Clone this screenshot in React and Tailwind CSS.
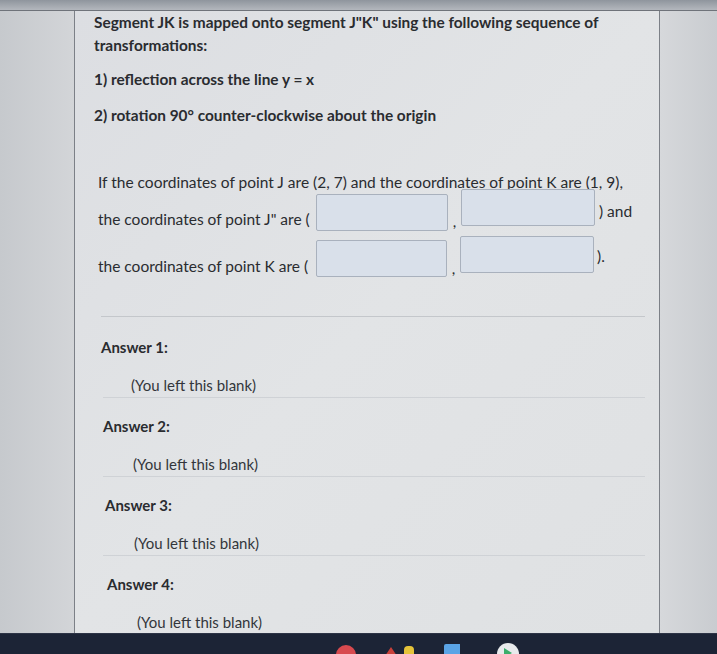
export default function App() {
  const answers = [
    { label: 'Answer 1:', pl: 'pl-[26px]', bl: 'pl-[56px]' },
    { label: 'Answer 2:', pl: 'pl-[28px]', bl: 'pl-[58px]' },
    { label: 'Answer 3:', pl: 'pl-[30px]', bl: 'pl-[59px]' },
    { label: 'Answer 4:', pl: 'pl-[32px]', bl: 'pl-[62px]' },
  ];

  return (
    <div
      className="w-[717px] h-[654px] overflow-hidden flex flex-col bg-[#cfd2d5] text-[#2a2c30]"
      style={{ fontFamily: 'Lato, "Open Sans", sans-serif' }}
    >
      <div className="h-[11px] bg-gradient-to-b from-[#8f959d] to-[#b3b7bd] border-b border-[#6f737a]" />

      <div className="flex-1 flex min-h-0">
        <div className="w-[74px] bg-gradient-to-r from-[#c6c9cd] to-[#d3d5d8]" />

        <div className="w-[586px] bg-gradient-to-br from-[#dcdee2] via-[#e2e4e6] to-[#dfe1e3] border-l border-r border-[#7c8087] flex flex-col">
          <div className="pl-[19px] text-[15.4px] font-bold leading-[23px]">
            <p>Segment JK is mapped onto segment J"K" using the following sequence of</p>
            <p>transformations:</p>
            <p className="mt-[11px]">1) reflection across the line y = x</p>
            <p className="mt-[13px]">2) rotation 90° counter-clockwise about the origin</p>
          </div>

          <div className="pl-[23px] pr-[20px] mt-[43px] text-[15.5px] leading-[22px]">
            <p className="leading-[24px]">If the coordinates of point J are (2, 7) and the coordinates of point K are (1, 9),</p>

            <div className="flex items-start h-[40px]">
              <span className="mt-[14px] w-[218px] whitespace-nowrap">the coordinates of point J" are (</span>
              <div className="w-[132px] h-[37px] bg-[#d9e0ea] border border-[#a9b1bd] rounded-[2px]" />
              <span className="w-[13px] mt-[16px] text-center">,</span>
              <div className="w-[134px] h-[37px] -mt-[5px] bg-[#d9e0ea] border border-[#a9b1bd] rounded-[2px]" />
              <span className="ml-[4px] mt-[6px] whitespace-nowrap">) and</span>
            </div>

            <div className="flex items-start mt-[7px] h-[40px]">
              <span className="mt-[14px] w-[218px] whitespace-nowrap">the coordinates of point K are (</span>
              <div className="w-[131px] h-[37px] -mt-[1px] bg-[#d9e0ea] border border-[#a9b1bd] rounded-[2px]" />
              <span className="w-[13px] mt-[16px] text-center">,</span>
              <div className="w-[134px] h-[37px] -mt-[5px] bg-[#d9e0ea] border border-[#a9b1bd] rounded-[2px]" />
              <span className="ml-[3px] mt-[4px]">).</span>
            </div>
          </div>

          <div className="ml-[26px] mr-[14px] mt-[35px] border-t border-[#c4c7cb]" />

          <div className="text-[15px]">
            {answers.map((a, i) => (
              <div key={a.label} className={i === 0 ? 'mt-[19px]' : 'mt-[17px]'}>
                <p className={`${a.pl} font-bold leading-[22px]`}>{a.label}</p>
                <p className={`${a.bl} mt-[16px] leading-[22px] text-[#33363b]`}>(You left this blank)</p>
                <div className="ml-[28px] mr-[14px] mt-[1px] border-t border-[#cfd2d6]" />
              </div>
            ))}
          </div>
        </div>

        <div className="flex-1 bg-gradient-to-r from-[#d6d8db] to-[#c9ccd0]" />
      </div>

      <div className="h-[21px] bg-[#1c2436] border-t border-[#2d3446] relative">
        <div className="absolute left-[336px] top-[11px] w-[20px] h-[20px] rounded-full bg-[#d84a4f]" />
        <div className="absolute left-[383px] top-[13px] w-0 h-0 border-l-[8px] border-r-[8px] border-b-[12px] border-l-transparent border-r-transparent border-b-[#c9413a]" />
        <div className="absolute left-[404px] top-[12px] w-[10px] h-[12px] rounded-t-[4px] bg-[#e5c33a]" />
        <div className="absolute left-[444px] top-[10px] w-[16px] h-[14px] bg-[#5aa4e6] rounded-tl-[2px]" />
        <div className="absolute left-[497px] top-[9px] w-[22px] h-[22px] rounded-full bg-[#e8eaec] flex items-start justify-center">
          <div className="mt-[5px] w-0 h-0 border-t-[5px] border-b-[5px] border-l-[8px] border-t-transparent border-b-transparent border-l-[#3bae6b]" />
        </div>
      </div>
    </div>
  );
}
